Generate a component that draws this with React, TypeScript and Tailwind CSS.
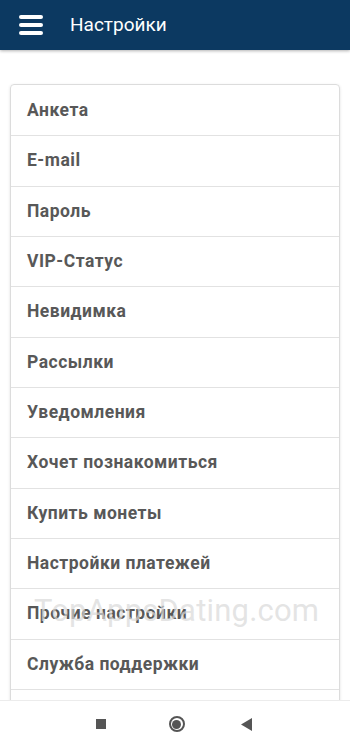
import React from 'react';

const items = [
    'Анкета',
    'E-mail',
    'Пароль',
    'VIP-Статус',
    'Невидимка',
    'Рассылки',
    'Уведомления',
    'Хочет познакомиться',
    'Купить монеты',
    'Настройки платежей',
    'Прочие настройки',
    'Служба поддержки',
    'Выход',
];

const App: React.FC = () => {
    return (
        <div className="relative h-[747px] w-[350px] overflow-hidden bg-white font-['Roboto',sans-serif]">
            <header className="flex h-[50px] items-center bg-[#0c3961] shadow-[0_1px_3px_rgba(0,0,0,0.3)]">
                <div className="ml-[19px] flex w-[24px] flex-col gap-[4px]">
                    <span className="h-[4px] rounded-full bg-white" />
                    <span className="h-[4px] rounded-full bg-white" />
                    <span className="h-[4px] rounded-full bg-white" />
                </div>
                <h1 className="ml-[27px] text-[19px] text-white">Настройки</h1>
            </header>

            <div className="mx-[10px] mt-[34px] rounded-[4px] border border-[#dcdcdc] shadow-[0_1px_3px_rgba(0,0,0,0.12)]">
                {items.map((label, i) => (
                    <div
                        key={label}
                        className={`flex h-[50.35px] items-center pb-[1px] pl-[16px] text-[17.5px] font-bold tracking-[0.5px] text-[#585858] ${i > 0 ? 'border-t border-[#e2e2e2]' : ''}`}
                    >
                        {label}
                    </div>
                ))}
            </div>

            <div className="pointer-events-none absolute left-[34px] top-[588px] text-[31px] tracking-[0.2px] text-[#d8d8d8]/70">
                TopAppsDating.com
            </div>

            <nav className="absolute bottom-0 left-0 flex h-[47px] w-full items-center border-t border-[#ececec] bg-white">
                <div className="flex w-full items-center justify-center">
                    <span className="ml-[-2px] h-[10px] w-[10px] bg-[#555]" />
                    <span className="ml-[63px] flex h-[16px] w-[16px] items-center justify-center rounded-full border-[2px] border-[#555]">
                        <span className="h-[9px] w-[9px] rounded-full bg-[#555]" />
                    </span>
                    <svg className="ml-[56px]" width="12" height="13" viewBox="0 0 12 13">
                        <polygon points="11,0 11,13 0,6.5" fill="#555" />
                    </svg>
                </div>
            </nav>
        </div>
    );
};

export default App;
